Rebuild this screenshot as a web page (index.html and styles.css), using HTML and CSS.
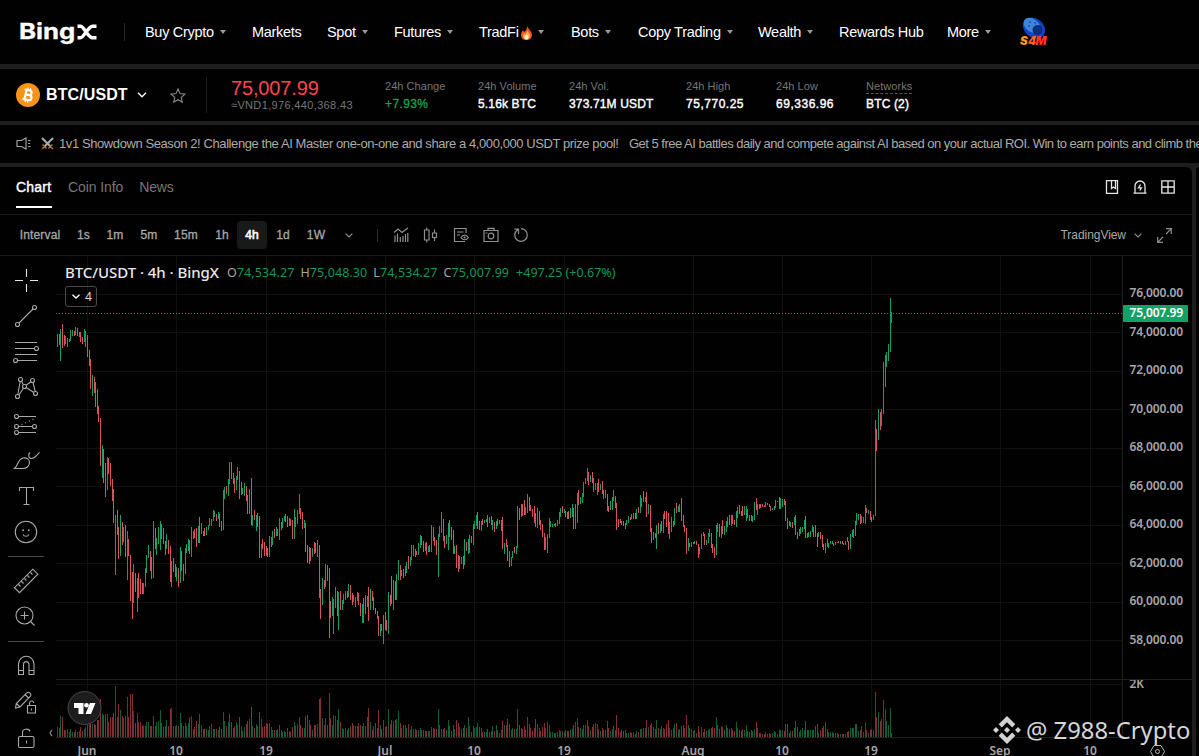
FILE: index.html
```html
<!DOCTYPE html>
<html lang="en">
<head>
<meta charset="utf-8">
<title>BTC/USDT | BingX</title>
<link rel="stylesheet" href="styles.css">
</head>
<body>
<header class="header">
  <div class="logo"><span class="logo-text">Bing</span><svg width="20" height="16" viewBox="0 0 20 16"><path d="M.5 2.200h3c3.400 0 7.600 11.600 12 11.600h4M.5 13.800h3c3.400 0 7.600-11.600 12-11.600h4" fill="none" stroke="#fff" stroke-width="3.400"/></svg></div>
  <nav class="nav">
    <a class="caret">Buy Crypto</a><a>Markets</a><a class="caret">Spot</a><a class="caret">Futures</a>
    <a class="caret">TradFi<svg class="fire" width="13" height="15" viewBox="0 0 13 15"><path d="M7 1c1 3 5 5 5 9 0 3-2 5-5.500 5S1 13 1 10c0-2 1-3.500 2-5l1 2c2-1 3-3 3-6z" fill="#f0532d"/><path d="M7 5c0 2 3.500 3 3 6-.3 2-2 3.500-3.700 3.500S3 13 3 11c0-1.500 1-2 1.500-3l1 1C6.500 8 7 7 7 5z" fill="#ffae3d"/><ellipse cx="6.500" cy="12" rx="2" ry="2.500" fill="#fff0c0"/></svg></a>
    <a class="caret">Bots</a><a class="caret">Copy Trading</a><a class="caret">Wealth</a><a>Rewards Hub</a><a class="caret">More</a>
  </nav>
  <svg class="promo" width="30" height="32" viewBox="0 0 30 32"><ellipse cx="14" cy="12" rx="12" ry="9.500" transform="rotate(38 14 12)" fill="#0a45c8"/><ellipse cx="12" cy="9.500" rx="9.500" ry="6.500" transform="rotate(38 12 9.500)" fill="#3e86dc"/><circle cx="17.500" cy="14" r="5" fill="#062a80"/><path d="M9 6h2M14 7h2M8 10h2M14 14l6-2M16 17l5-3" stroke="#123a86" fill="none"/><text x="0" y="29" class="promo-s">S</text><text x="8" y="29" class="promo-4">4</text><text x="15.500" y="29" class="promo-m">M</text></svg>
</header>

<section class="ticker">
  <div class="pair">
    <svg width="24" height="24" viewBox="0 0 24 24"><circle cx="12" cy="12" r="12" fill="#f7931a"/><g transform="rotate(13 12 12)" stroke="#fff" fill="none"><path d="M7.500 7.200h5.300a2.300 2.300 0 0 1 0 4.600H9.500m0 0h4a2.500 2.500 0 0 1 0 5.100H7.500M9.500 7v10" stroke-width="2.100"/><path d="M10.700 4.800v2.500M13.200 4.800v2.500M10.700 17v2.500M13.200 17v2.500" stroke-width="1.400"/></g></svg>
    <b>BTC/USDT</b>
    <svg class="pair-arrow" width="10" height="6" viewBox="0 0 10 6"><path d="M1 .8l4 4 4-4" class="line-white"/></svg>
    <svg class="star" width="16" height="15" viewBox="0 0 16 15"><path d="M8 1l2 4.600 5 .5-3.800 3.300 1.100 4.800L8 11.700l-4.300 2.500 1.100-4.800L1 6.100l5-.5z" fill="none" stroke="#8a8a8a" stroke-width="1.100"/></svg>
  </div>
  <div class="price"><strong>75,007.99</strong><span>≈VND1,976,440,368.43</span></div>
  <div class="stats">
    <div class="stat"><span>24h Change</span><em class="up">+7.93%</em></div>
    <div class="stat"><span>24h Volume</span><em>5.16k BTC</em></div>
    <div class="stat"><span>24h Vol.</span><em>373.71M USDT</em></div>
    <div class="stat"><span>24h High</span><em class="num">75,770.25</em></div>
    <div class="stat"><span>24h Low</span><em class="num">69,336.96</em></div>
    <div class="stat"><span class="dashed">Networks</span><em class="net">BTC (2)</em></div>
  </div>
</section>

<section class="notice">
  <svg width="15" height="13" viewBox="0 0 15 13"><path d="M1 3.500h4.500L10 1v11L5.500 9.500H1zM12 3.500h2.500M12 6.500h2M12 9.500h2.500" fill="none" stroke="#a0a0a0" stroke-width="1.200"/></svg>
  <svg class="swords" width="13" height="13" viewBox="0 0 13 13"><path d="M1 1l8.500 8.500M12 1L3.500 9.500" stroke="#a9aeb2" stroke-width="2"/><path d="M1.500 7.500l4 4M11.500 7.500l-4 4M3.500 9.500l-2.500 2.500M9.500 9.500L12 12" stroke="#b07223" stroke-width="1.500"/></svg>
  <span class="msg-a">1v1 Showdown Season 2! Challenge the AI Master one-on-one and share a 4,000,000 USDT prize pool!</span>
  <span class="msg-b">Get 5 free AI battles daily and compete against AI based on your actual ROI. Win to earn points and climb the</span>
</section>

<div class="workspace">
<main class="panel">
  <div class="tabs">
    <a class="active">Chart</a><a>Coin Info</a><a>News</a>
    <div class="tab-icons">
      <svg width="14" height="14" viewBox="0 0 14 14"><path d="M1.500.7h11v12.600h-11zM6.500 1v7.500l2-1.500 2 1.500V1" class="icon-lt"/></svg>
      <svg width="14" height="14" viewBox="0 0 14 14"><path d="M.5 13.200h13M2 13V6a5 5 0 0 1 10 0v7M7.500 4.500L5.500 7.800h3L6.800 10.500" class="icon-lt"/></svg>
      <svg width="14" height="14" viewBox="0 0 14 14"><path d="M.8.8h12.400v12.400H.8zM7 .8v12.400M.8 7h12.400" class="icon-lt"/></svg>
    </div>
  </div>
  <div class="toolbar">
    <div class="intervals"><span>Interval</span><span>1s</span><span>1m</span><span>5m</span><span>15m</span><span>1h</span><span class="on">4h</span><span>1d</span><span>1W</span></div>
    <svg class="more" width="8" height="5" viewBox="0 0 8 5"><path d="M.6.6L4 4 7.400.6" class="icon"/></svg>
    <i class="rule"></i>
    <div class="tools">
      <svg width="16" height="16" viewBox="0 0 16 16"><path d="M1 5.500L5 2l4 3.500L15 1M2 8.500V15M4.500 6.500V15M7.300 10V15M10 9v6M12.500 7v8M14.800 6v9" class="icon"/></svg>
      <svg width="16" height="16" viewBox="0 0 16 16"><path d="M1.500 3h4.500v10h-4.500zM3.700.5V3M3.700 13v2.500M9.500 6h4v4.500h-4zM11.500 2.500V6M11.500 10.500V14" class="icon"/></svg>
      <svg width="16" height="16" viewBox="0 0 16 16"><path d="M13 6V1.500H1.500v13H7M4 5h6.500M4 8h3M7 14.500h5M8 10.500c2-3.200 5.500-3.200 7.200 0-1.700 3-5.200 3-7.200 0z" class="icon"/><circle cx="11.600" cy="10.500" r="1" fill="#8f8f8f"/></svg>
      <svg width="16" height="16" viewBox="0 0 16 16"><path d="M1 3.500h14v11H1zM5 3.500V1.300h6v2.200M2.500 6h2" class="icon"/><circle cx="8" cy="9" r="2.800" class="icon"/></svg>
      <svg width="16" height="16" viewBox="0 0 16 16"><path d="M5.500 3v4M1.500 2.200h4V6M8 1.700a6.300 6.300 0 1 1-6.300 6.300c0-2 1-4 3-5.300" class="icon"/></svg>
    </div>
    <div class="view">TradingView <svg width="8" height="5" viewBox="0 0 8 5"><path d="M.6.6L4 4 7.400.6" class="icon"/></svg>
    <svg class="expand" width="15" height="15" viewBox="0 0 15 15"><path d="M9 .7h5.300V6M14.300.7L9 6M6 14.300H.7V9M.7 14.300L6 9" class="icon"/></svg></div>
  </div>

  <div class="chart-area">
    <aside class="draw">
      <svg viewBox="0 0 36 36" class="bright"><path d="M7 18.500h8M22 18.500h8M18.500 7v8M18.500 22v8"/></svg>
      <svg viewBox="0 0 36 36"><path d="M11 25L25 11"/><circle cx="26.500" cy="9.500" r="2"/><circle cx="9.500" cy="26.500" r="2"/></svg>
      <svg viewBox="0 0 36 36"><path d="M7 8.500h22M7 14.500h19.500M7 20.500h22M9.500 26.500H29"/><circle cx="28.500" cy="14.500" r="2"/><circle cx="7.500" cy="26.500" r="2"/></svg>
      <svg viewBox="0 0 36 36"><path d="M9.800 24.500l2.400-13M13.500 11.200l2 3.500M18 15.200l5-3.500M25 12.500l2.200 9M11 25l4.500-7M18 17.500l8 5"/><circle cx="12.500" cy="9.500" r="2"/><circle cx="24.500" cy="10.500" r="2"/><circle cx="16.500" cy="16.500" r="2"/><circle cx="9.500" cy="26.500" r="2"/><circle cx="27.500" cy="23.500" r="2"/></svg>
      <svg viewBox="0 0 36 36"><path d="M10.500 10.500H28M10.500 20.500h14M10.500 26.500H28"/><path d="M13.500 18.500L27 12.500" stroke-dasharray="1 3"/><circle cx="8.500" cy="10.500" r="2"/><circle cx="8.500" cy="20.500" r="2"/><circle cx="26.500" cy="20.500" r="2"/><circle cx="8.500" cy="26.500" r="2"/></svg>
      <svg viewBox="0 0 36 36"><path d="M6.500 26.500C10 24 9.500 17.500 15 16c4-.7 6.500 1.500 6.500 4.500 0 3.300-3 6-6.500 6zM22 10.500c-2 2-1.800 5 .8 6 3.700.7 5-2.500 8.700-6"/></svg>
      <svg viewBox="0 0 36 36"><path d="M11.500 13V9.500h14V13M18.500 9.500v17M15.500 26.500h6"/></svg>
      <svg viewBox="0 0 36 36"><circle cx="18" cy="18" r="10.700"/><path d="M15 20.500a3.400 3.400 0 0 0 6 0"/><circle cx="15.200" cy="16.200" r=".4"/><circle cx="20.800" cy="16.200" r=".4"/></svg>
      <hr>
      <svg viewBox="0 0 36 36"><path d="M24.800 6.200l5 5L11.500 29.700l-5-5zM22.500 9.500l2 2M19.500 12.500l2 2M16.500 15.500l2 2M13.500 18.500l2 2M10.500 21.500l2 2"/></svg>
      <svg viewBox="0 0 36 36"><circle cx="16.500" cy="16.500" r="8.500"/><path d="M22.500 22.500l4 4M12.500 16.500h8M16.500 12.500v8"/></svg>
      <hr>
      <svg viewBox="0 0 36 36"><path d="M10.500 26.500V16a7.500 7.500 0 0 1 15.500 0v10.500h-5V17c0-4.500-5.500-4.500-5.500 0v9.500zM10.500 22.500h5M21 22.500h5"/></svg>
      <svg viewBox="0 0 36 36"><path d="M7.500 24l.8-4.500L19 8.700c2-1.500 5 1.500 3.500 3.500L12 23zM17 10.500l3.500 3.500M8.300 19.500L12 23M19.500 21.500h8v7.500h-8zM21.500 21.500V19c.2-2.600 4-2.600 4.200 0M23.500 24.500v2"/></svg>
      <svg viewBox="0 0 36 36"><rect x="10.500" y="16.500" width="15.500" height="11" rx="1.500"/><path d="M14.500 16.500V12.500c0-4 6.500-4.500 7.500-1M18.500 20.500v3"/></svg>
    </aside>
    <div class="plot">
      <svg class="chart" width="1136" height="500" viewBox="56 256 1136 500">
        <g id="grid"></g>
        <path d="M56 679.500H1192M56 737.500H1122M1122.500 256V737" stroke="#1f1f1f"/>
        <g id="bars" shape-rendering="crispEdges"></g>
        <path d="M56 313.500H1122" stroke="#13a265" stroke-dasharray="1 2"/>
        <rect x="1123" y="305" width="65" height="17" rx="1" fill="#13a265"/>
        <g id="labels"></g>
        <svg x="1123" y="680" width="60" height="14"><text x="6.500" y="8" class="axis">2K</text></svg>
        <path d="M1154 745.500h7l3.500 6-3.500 6h-7l-3.500-6z" fill="none" stroke="#b5b5b5"/><circle cx="1157.500" cy="751.500" r="2" fill="none" stroke="#b5b5b5"/>
        <circle cx="84.500" cy="708" r="16.500" fill="#1d1d1d" stroke="#474747"/>
        <path d="M74 703h9.500v11h-5v-6H74zM90 703h5.500L91 714h-5.500z" fill="#fff"/><circle cx="86.500" cy="705.300" r="2.300" fill="#fff"/>
      </svg>
      <svg class="collapse" width="4" height="8" viewBox="0 0 4 8"><path d="M3 .8L1 4l2 3.200" class="icon"/></svg>
      <div class="legend">
        <div class="legend-line"><b>BTC/USDT · 4h · BingX</b><span class="ohlc"><i>O</i>74,534.27</span><span class="ohlc"><i>H</i>75,048.30</span><span class="ohlc"><i>L</i>74,534.27</span><span class="ohlc"><i>C</i>75,007.99</span><span class="chg">+497.25 (+0.67%)</span></div>
        <div class="count"><svg width="8" height="5" viewBox="0 0 8 5"><path d="M.5.700L4 4 7.500.7" class="line-white"/></svg>4</div>
      </div>
    </div>
  </div>
</main>
<div class="side"></div>
</div>

<div class="watermark">
  <svg width="28" height="28" viewBox="0 0 28 28" fill="#d2d2d2"><path d="M14 0l8.300 8.300-3.100 3.100L14 6.200l-5.200 5.200-3.100-3.100zM14 28l8.300-8.300-3.100-3.100-5.200 5.200-5.200-5.200-3.100 3.100zM3 11l3 3-3 3-3-3zM25 11l3 3-3 3-3-3zM14 11l3 3-3 3-3-3z"/></svg>
  <span>@ Z988-Crypto</span>
</div>
<script src="chart.js"></script>
</body>
</html>
```
FILE: styles.css
```css
* { box-sizing: border-box; }
body { margin: 0; width: 1199px; height: 756px; overflow: hidden; position: relative; background: #1e1e1e; color: #fff; font-family: "Liberation Sans", Arial, sans-serif; display: flex; flex-direction: column; }
svg { flex: none; display: block; }
.line-white { fill: none; stroke: #fff; stroke-width: 1.3; }
.icon { fill: none; stroke: #8f8f8f; stroke-width: 1.2; }
.icon-lt { fill: none; stroke: #e6e6e6; stroke-width: 1.3; }

.header { height: 64px; flex: none; background: #010101; display: flex; align-items: center; padding-left: 19px; }
.logo { width: 106px; height: 18px; border-right: 1px solid #262626; display: flex; align-items: center; }
.logo-text { font: 700 22px/24px "Inter", sans-serif; width: 58px; -webkit-text-stroke: 0.3px #fff; transform: scaleX(1.17); transform-origin: left; margin-top: -2px; }
.nav { margin-left: 20px; display: grid; grid-template-columns: 107px 75px 67px 85px 92px 67px 120px 81px 108px 73px; font-size: 14.5px; letter-spacing: -0.3px; }
.nav a { display: flex; align-items: center; white-space: nowrap; height: 20px; }
.caret::after { content: ""; margin-left: 6px; border: 3.5px solid transparent; border-top: 4px solid #999; border-bottom: 0; }
.fire { margin-left: 1px; margin-right: -1px; }
.promo { margin-top: 0; overflow: visible; }
.promo-s, .promo-4, .promo-m { font: italic 900 11.5px "Inter", sans-serif; }
.promo-s { fill: #ff961f; }
.promo-4 { fill: #ff622b; }
.promo-m { fill: #ff3322; }

.ticker { margin-top: 5px; height: 52px; flex: none; background: #010101; display: flex; align-items: center; padding-left: 16px; }
.pair { width: 191px; height: 36px; border-right: 1px solid #1e1e1e; display: flex; align-items: center; }
.pair b { font-size: 16px; margin-left: 6px; width: 83px; letter-spacing: 0.1px; }
.pair-arrow { margin-left: 8px; }
.star { margin-left: 23px; }
.price { margin: -1px 0 0 24px; width: 154px; display: flex; flex-direction: column; }
.price strong { font-weight: 400; font-size: 20px; line-height: 20px; color: #ff4450; letter-spacing: -0.15px; }
.price span { font-size: 11px; line-height: 14px; color: #767676; letter-spacing: 0.35px; }
.stats { display: grid; grid-template-columns: 93px 91px 117px 90px 90px 60px; margin-top: -1px; }
.stat { display: flex; flex-direction: column; align-items: flex-start; white-space: nowrap; }
.stat span { font-size: 11px; line-height: 14px; color: #767676; letter-spacing: 0.05px; }
.stat em { font-style: normal; font-size: 12px; line-height: 14px; margin-top: 4px; letter-spacing: 0.15px; -webkit-text-stroke: 0.4px #fff; }
.stat em.num { letter-spacing: 0.52px; }
.stat em.up { color: #13a44f; letter-spacing: 0.4px; -webkit-text-stroke: 0.3px #13a44f; }
.stat em.net { margin-top: 3px; }
.stat .dashed { border-bottom: 1px dashed #555; }

.notice { margin-top: 4px; height: 38px; flex: none; background: #010101; display: flex; align-items: center; padding: 0 0 2px 16px; overflow: hidden; white-space: nowrap; font-size: 13px; color: #ababab; }
.notice svg { margin-top: 1px; }
.notice .swords { margin-left: 10px; margin-right: 5px; }
.msg-a { width: 570px; flex: none; letter-spacing: -0.41px; }
.msg-b { letter-spacing: -0.51px; }

.workspace { margin-top: 4px; flex: 1; display: flex; gap: 4px; min-height: 0; }
.panel { width: 1192px; flex: none; background: #010101; border-top-right-radius: 6px; display: flex; flex-direction: column; }
.side { flex: 1; background: #010101; border-top-left-radius: 6px; }
.tabs { height: 48px; flex: none; border-bottom: 1px solid #1a1a1a; display: flex; align-items: flex-start; padding-left: 16px; gap: 16px; font-size: 14px; color: #767676; }
.tabs a { height: 41px; line-height: 40px; letter-spacing: -0.1px; }
.tabs .active { width: 36px; color: #fff; border-bottom: 2px solid #fff; letter-spacing: 0.2px; -webkit-text-stroke: 0.4px #fff; }
.tab-icons { margin-left: auto; margin-right: 17px; display: flex; gap: 14px; padding-top: 13px; }
.toolbar { height: 41px; flex: none; border-bottom: 1px solid #1a1a1a; display: flex; align-items: center; font-size: 12px; color: #a8a8a8; }
.intervals { display: grid; grid-template-columns: 48px 39px 24px 44px 30px 42px 18px 44px 22px; align-items: center; justify-items: center; padding-left: 16px; letter-spacing: 0.15px; -webkit-text-stroke: 0.3px #a8a8a8; }
.intervals .on { width: 30px; height: 28px; line-height: 28px; background: #181a1a; border-radius: 4px; text-align: center; color: #fff; -webkit-text-stroke: 0.6px #fff; }
.more { margin-left: 18px; }
.rule { width: 1px; height: 13px; background: #2b2b2b; margin-left: 24px; }
.tools { display: flex; gap: 14px; margin-left: 15px; }
.view { margin-left: auto; display: flex; align-items: center; gap: 8px; padding-right: 20px; font-size: 12px; letter-spacing: -0.05px; }
.expand { margin-left: 7px; }

.chart-area { flex: 1; min-height: 0; display: flex; }
.draw { width: 56px; flex: none; padding: 6px 0 0 8px; height: 500px; overflow: hidden; }
.draw svg { width: 36px; height: 36px; fill: none; stroke: #a9a9a9; stroke-width: 1.1; }
.draw .bright { stroke: #e5e5e5; }
.draw hr { width: 36px; height: 1px; border: 0; background: #4a4a4a; margin: 6px 0; }
.plot { position: relative; width: 1136px; height: 500px; }
.legend { position: absolute; left: 9px; top: 6px; font-family: "Noto Sans", "Open Sans", sans-serif; }
.legend-line { display: flex; align-items: center; height: 20px; white-space: nowrap; font-size: 12.5px; color: #14955f; }
.legend-line b { font-weight: 500; font-size: 15px; letter-spacing: -0.05px; color: #e8e8e8; width: 162px; }
.ohlc { margin-right: 6px; letter-spacing: 0.09px; }
.ohlc i { font-style: normal; color: #a5a5a5; }
.chg { letter-spacing: 0; margin-left: 1px; }
.count { width: 32px; height: 21px; margin-top: 4px; border: 1px solid #4a4a4a; border-radius: 3px; display: flex; align-items: center; gap: 5px; padding-left: 6px; font-size: 12px; color: #ddd; }
.collapse { position: absolute; left: -7px; top: 473px; }
.axis { font: 600 12px "Noto Sans", "Open Sans", sans-serif; fill: #a6a6a6; }
.axis.now { fill: #fff; }
.axis.mid { text-anchor: middle; }

.watermark { position: absolute; left: 993px; top: 716px; display: flex; align-items: center; gap: 5px; color: #d6d6d6; font: 23.8px/28px "Noto Sans", sans-serif; white-space: nowrap; }
```
FILE: chart.js
```js
// Each bar: x, g|r (up or down), high-low / volume height.
// x and prices are in third-pixels from the segment origin.
const segments = [
  { x: 0, y: 255, bars: `172g237-276/10 178r237-270/9 181g222-318/21 187r207-279/20 193r240-273/7 196g243-267/7 202g249-276/8 208g252-262/5 211g225-258/8 217g225-243/5 223r228-243/5 226g216-240/7 232r219-243/5 238g231-246/6 241r231-261/10 247r246-267/6 253g222-261/8 256g228-276/10 262r240-306/16 268r285-333/15 271r312-402/14 277g360-423/13 283r366-414/13 286r381-456/12 292r402-477/17 295r453-501/17 301r489-633/38 307g570-669/23 310r582-684/22 316r624-726/23 322g606-705/23 325r609-657/15 331r624-693/20 337r672-738/20 340r702-804/24` },
  { x: 0, y: 506, bars: `346g27-207/51 352r12-87/20 355r63-159/33 361g27-150/27 367r48-117/21 370g63-108/19 376r57-153/21 382g75-222/40 385r99-150/20 391r147-285/43 397r198-339/43 400g174-291/26 406r201-258/14 412g216-318/24 415r201-276/15 421r219-264/15 427r231-264/12 430g231-264/11 436g186-243/11 439g147-201/15 445g117-156/15 451r135-195/11 454r153-219/11 460g45-216/21 466r66-129/11 469g96-147/15 475g63-114/16 481g45-132/27 484r54-99/14 490r66-114/10 496r105-147/11 499g84-129/17 505r102-144/11 511r120-228/28 514g165-243/29 520r156-198/11 526r174-213/11 529g183-225/12 535r186-243/11` },
  { x: 180, y: 440, bars: `1g321-429/24 4r333-393/14 10r372-423/11 16g324-402/14 19g312-339/11 25g297-333/14 28r300-342/20 34g261-351/21 40g273-297/8 43r267-294/10 49r264-321/16 55g258-309/13 58r231-309/23 64g249-282/12 70r273-288/8 73r264-288/8 79g261-285/8 85g255-270/7 88g234-258/11 94g237-258/13 100g210-243/8 103g213-231/8 109r222-243/8 115g216-237/7 118r222-261/10 124r243-273/8 130g150-270/25 133g141-177/16 139r138-162/11 145g117-168/15 148g66-132/23 154r66-117/15 160r99-132/9 163r114-159/11 169g108-150/15 172g81-120/12 178r93-177/20 184r126-165/11 187g144-162/6 193g129-168/10 199r138-183/13 202r165-222/16 208g147-222/18 214r114-255/30 217g225-258/11 223r210-240/9 229g225-273/13 232r219-261/11 238r228-354/25 244g312-354/18 247r297-327/10 253r306-348/11 259r318-348/14 262r324-351/13 268g288-351/14 274g291-321/10 277g273-315/7 283r267-294/7 289g261-288/7 292g267-288/8 298g234-300/12 304r246-270/7 307g234-264/5 313g228-243/6 316r222-246/5 322r228-261/9 328g234-258/6 331r237-258/5 337r240-297/10 343g207-297/15 346g231-261/11 352g210-252/13 358g162-222/20 361r204-237/12 367r216-267/9 373g240-264/9 376r249-336/21 382r315-369/22 388r321-372/17 391r324-363/12 397g324-351/7 403r306-342/12 406r309-339/12 412g300-351/13 418r315-474/38 421r447-537/39 427g414-495/19 433r420-447/12 436g372-441/19 442r375-423/12 448r384-594/44 451r483-534/19 457g471-528/12 460g477-582/22 466g441-504/21 472r453-528/17 475g456-570/28 481r453-510/15 487g480-510/9 490g462-492/8 496g453-480/9 502r453-474/7 505g432-471/9 511r435-480/11 517r459-495/14 520g465-486/12 526g471-501/11 532g456-483/11 535r459-495/14 541r489-528/12 547g492-549/11 550g474-549/14 556r465-522/11 562g468-501/20 565r441-543/29 571g447-510/15 577r453-483/7 580r471-510/11 586r504-522/14 592r513-537/9 595r528-588/27 601g552-588/12 604r552-573/8 610g525-612/17 616r516-570/10 619r540-573/11 625g456-582/28 631r465-498/13 634r408-492/17 640g420-510/16 646r423-480/17 649g402-480/18 655g360-420/26 661r375-420/14 664g390-408/9 670r387-414/12 676g378-408/12 679g366-399/9 685r348-387/13 691g351-378/7 694g315-360/11 700g315-348/8 706r327-351/8 709r333-345/7 715g309-345/7 721g285-324/9 724r288-315/7 730r303-336/7 736g309-333/6 739r306-345/6 745g318-336/6 748g315-336/6 754g255-336/10 760r261-303/9 763r291-318/8 769r300-345/8 775g282-411/28 778g258-291/12 784g216-279/8 790r237-303/8 793r288-324/9 799g285-312/7 805g249-330/17 808r240-291/11 814r261-300/6 820r270-342/12 823g318-342/8 829r315-384/17 835r345-396/14 838g348-387/10 844g351-372/8 850r348-387/9 853g297-375/12 859r306-333/9 865g297-342/20 868g285-339/11 874r288-309/5 880g252-315/11` },
  { x: 470, y: 440, bars: `13g243-267/9 19g225-258/10 22r216-267/14 28r243-270/10 34g243-273/9 37r237-255/5 43g240-249/5 49g237-246/5 52r225-261/8 58g231-249/5 64r228-255/6 67g240-270/11 73r246-276/6 79g243-267/12 82r237-258/7 88g240-252/4 94r240-273/7 97r231-327/16 103g309-342/12 109r297-321/12 112r315-363/18 118r333-381/13 124g351-378/7 127g333-354/9 133r321-339/8 139g318-342/8 142g198-324/28 148r204-240/12 154g192-231/9 157r192-228/8 163r180-225/11 166g201-225/7 172g162-219/20 178r171-213/13 181r195-213/9 187r207-231/6 193r198-249/9 196r219-261/18 202g204-264/13 208r213-255/9 211r240-270/6 217r252-291/10 223r279-330/14 226g291-330/9 232g282-339/15 238g234-294/12 241g243-261/5 247g252-261/5 253g252-258/4 256r249-261/4 262g240-258/5 268g216-252/7 271g204-231/6 277r198-219/6 283g207-219/5 286r213-231/7 292r216-237/6 295r213-237/6 301g204-234/7 307g192-231/8 310r204-267/12 316g192-267/15 322g159-249/19 325r150-195/10 331g171-192/9 337g159-189/8 340g126-171/12 346g114-132/12 352g84-123/17 355r96-135/11 361g105-126/7 367r96-129/10 370r114-156/13 376g129-150/14 382g129-165/13 385r117-156/8 391g132-150/6 397r123-162/9 400r150-177/7 406g150-174/7 412r162-213/16 415r198-216/9 421g183-210/6 427g171-210/8 430g150-183/11 436r168-204/7 439r189-270/22 445r237-261/9 451r237-249/5 454r243-255/7 460r243-258/6 466g249-267/7 469g240-255/4 475g228-249/4 481r231-240/5 484g222-237/4 490g219-237/5 496r219-237/3 499g207-237/6 505r201-219/5 511g165-219/8 514g174-201/8 520r153-186/9 526g171-186/9 529r156-231/17 535g192-222/10 541r195-276/12 544r264-309/14 550g276-300/10 556r279-294/8 559g255-327/17 565r249-282/9 571g252-279/8 574r243-273/11 580g222-279/9 583r213-237/8 589r213-261/13 595r219-282/17 598g246-297/9 604g231-276/7 610r243-261/9 613g204-255/13 619r189-219/14 625g198-216/7 628g192-216/8 634r174-243/11 640r225-261/12 643r255-276/9 649r264-342/22 655g294-333/12 658r309-321/9 664g306-321/8 670g306-312/6 673g303-312/7 679r303-315/4 685r312-354/11 688g321-342/5` },
  { x: 700, y: 440, bars: `4g282-327/10 10g276-288/5 13r282-315/8 19g300-315/6 25g279-309/7 28g267-291/8 34r279-324/9 37r312-339/10 43r321-354/9 49g255-345/20 52g249-276/12 58r252-291/8 64g258-294/11 67r240-282/10 73g258-285/7 79g243-276/12 82g231-261/9 88r225-255/8 94g225-258/9 97r225-252/7 103r240-255/6 109g213-261/15 112g201-234/9 118r195-222/7 124r213-228/6 127r198-228/8 133g198-225/7 139g198-243/12 142r207-234/6 148r225-243/5 154r225-243/7 157g228-246/6 163g186-240/8 169r174-210/15 172g192-225/9 178g192-207/4 181r192-204/4 187r192-201/3 193r195-201/3 196g186-201/5 202r189-195/3 208r192-201/4 211r198-213/3 217g204-210/4 223g198-210/6 226g180-204/5 232r183-186/3 238r171-207/7 241g174-207/7 247g177-201/7 253r177-195/6 256r183-243/13 262r234-267/13 268r243-258/4 271g246-261/6 277r246-264/6 283g231-255/9 286r225-285/16 292r276-297/10 298g267-288/5 301g261-282/7 307g261-276/9 313g240-267/7 316r228-294/16 322r279-294/7 325g276-291/7 331g273-291/7 337g255-276/7 340r261-291/7 346r255-291/11 352r279-321/13 355g276-291/4 361r276-297/7 367r285-321/9 370r312-330/11 376g309-339/15 382r297-321/8 385g309-324/5 391g303-312/5 397g303-312/5 400r309-318/4 406g306-315/4 412g306-309/4 415r303-309/3 421g303-312/3 427r303-312/3 430r309-315/3 436g303-315/3 442r291-306/5 445r303-330/6 451g282-327/9 457g270-291/9 460g267-294/9 466g243-288/13 469g219-255/13 475g222-240/6 481r222-252/7 484g228-249/11 490g231-249/5 496g195-252/15 499r204-219/7 505g210-222/4 511r213-240/7 514r231-246/8 520g225-240/7` },
  { x: 860, y: 280, bars: `46g420-708/45 49r447-513/20 55g387-480/25 61r396-450/16 64g387-438/18 70g246-402/37 76g225-321/28 79g216-261/16 85g192-243/12 91g54-216/29 94g96-129/4` }
];

const NS = 'http://www.w3.org/2000/svg';
function add(parent, tag, attrs, text) {
  const el = document.createElementNS(NS, tag);
  for (const key in attrs) el.setAttribute(key, attrs[key]);
  if (text) el.textContent = text;
  document.getElementById(parent).appendChild(el);
}

const dates = [[87, 'Jun'], [176, '10'], [266, '19'], [385, 'Jul'], [474, '10'], [564, '19'], [693, 'Aug'], [782, '10'], [871, '19'], [1000, 'Sep'], [1090, '10']];
const gridY = [294, 332, 371, 409, 448, 486, 525, 563, 602, 640, 684];
for (const y of gridY) add('grid', 'path', { d: `M56 ${y + 0.5}H1122`, stroke: '#101010' });
for (const [x, name] of dates) {
  add('grid', 'path', { d: `M${x + 0.5} 256V737`, stroke: '#101010' });
  add('labels', 'text', { x, y: 755, class: 'axis mid' }, name);
}
for (let i = 0; i < 10; i++) {
  add('labels', 'text', { x: 1129.5, y: Math.round(297 + i * 38.5), class: 'axis', textLength: 53.5 }, `${76 - i * 2},000.00`);
}
add('labels', 'text', { x: 1129.5, y: 317, class: 'axis now', textLength: 53.5 }, '75,007.99');

for (const seg of segments) {
  for (const bar of seg.bars.split(' ')) {
    const [, bx, dir, hi, lo, vol] = bar.match(/(\d+)([gr])(\d+)-(\d+)\/(\d+)/);
    const x = seg.x + Math.floor(bx / 3);
    const top = seg.y + Math.round(hi / 3);
    const up = dir === 'g';
    add('bars', 'rect', { x, y: top, width: 1, height: seg.y + Math.round(lo / 3) - top, fill: up ? '#14a065' : '#d9525b' });
    add('bars', 'rect', { x, y: 737 - vol, width: 1, height: vol, fill: up ? '#125f36' : '#852c35' });
  }
}
```
